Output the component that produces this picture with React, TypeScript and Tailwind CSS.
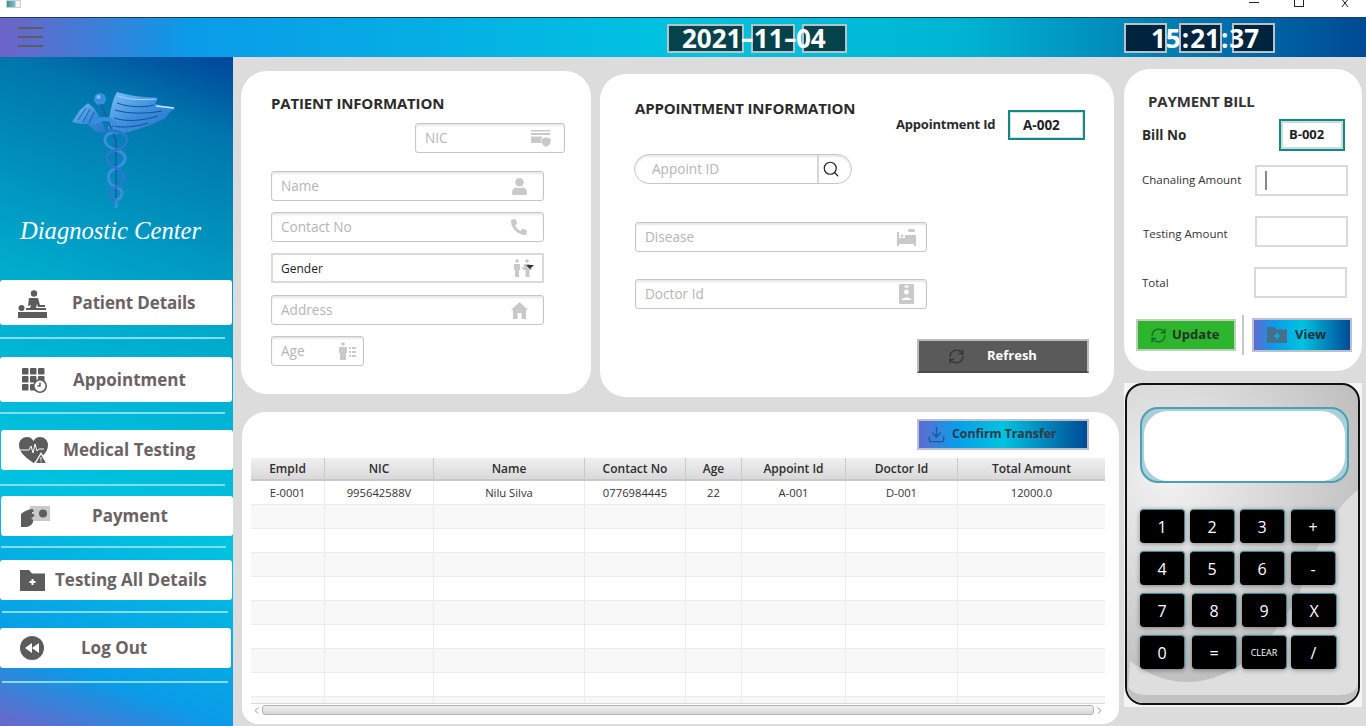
import React from 'react';
import { Download, RefreshCw, Search, ChevronLeft, ChevronRight } from 'lucide-react';
import { FaPhoneAlt, FaUser } from 'react-icons/fa';

const BTN_GRADIENT = 'bg-[linear-gradient(to_right,#5f6bd2,#0a9de8_22%,#00c3e0_50%,#004b96)]';

function Caduceus() {
  return (
    <svg viewBox="70 92 106 116" className="block w-[106px] h-[116px] ml-[70px] mt-[35px]">
      <defs>
        <linearGradient id="cad" x1="0" y1="0" x2="1" y2="1">
          <stop offset="0" stopColor="#7cc0f4" />
          <stop offset="0.5" stopColor="#3a8ede" />
          <stop offset="1" stopColor="#2470c4" />
        </linearGradient>
      </defs>
      <path d="M72 122 L80 110 L88 103 L94 108 L100 118 L108 134 L96 132 L88 124 L80 124Z" fill="url(#cad)" />
      <g stroke="#16518f" strokeWidth="0.8" fill="none">
        <path d="M78 120 L86 108" />
        <path d="M83 122 L90 109" />
        <path d="M89 123 L94 112" />
      </g>
      <path d="M108 128 C110 112 112 100 117 92 C130 96 145 97 158 98 L155 104 L175 108 L168 114 L166 118 L157 122 L150 125 C138 130 124 134 110 135Z" fill="url(#cad)" />
      <g fill="none" strokeWidth="1">
        <path d="M118 96 C130 100 142 100 156 99" stroke="#a4d6f8" />
        <path d="M156 106 L174 108" stroke="#c4e8fc" strokeWidth="1.4" />
        <path d="M117 103 C128 107 142 108 154 105" stroke="#17508e" />
        <path d="M115 110 C128 114 146 114 162 111" stroke="#17508e" />
        <path d="M114 118 C126 122 142 121 158 116" stroke="#17508e" />
        <path d="M112 126 C122 128 136 127 148 123" stroke="#17508e" />
      </g>
      <circle cx="100" cy="99" r="6" fill="#3a8ede" />
      <circle cx="98.5" cy="97" r="2" fill="#7cc0f4" />
      <path d="M101 104 L116 140 L116 208" stroke="#1c5fae" strokeWidth="2" fill="none" />
      <path d="M94 124 C100 116 112 118 116 126" stroke="#3a8ede" strokeWidth="4" fill="none" />
      <path d="M124 130 C98 132 102 146 116 150 C130 154 126 164 116 168 C105 172 107 184 116 187 C125 190 123 198 116 200 L116 208" stroke="#3a8ede" strokeWidth="3" fill="none" />
      <path d="M108 130 C134 132 130 146 116 150 C102 154 106 164 116 168 C127 172 125 184 116 187 C107 190 109 198 116 200" stroke="#2a78cc" strokeWidth="3" fill="none" />
    </svg>
  );
}

function MassageIcon() {
  return (
    <svg viewBox="0 0 29 28" className="w-[29px] h-[28px] fill-[#5c5c5c]">
      <circle cx="16" cy="3.5" r="3.2" />
      <path d="M11 8 h9 l2 7 h5 v2 h-7 l-1 -3 -1 4 h-6 l1 -3 -3 1z" />
      <circle cx="3.5" cy="18" r="3" />
      <path d="M8 18 h20 v2 H8z M0 22 h29 v6 H0z" />
    </svg>
  );
}

function CalendarClockIcon() {
  return (
    <svg viewBox="0 0 25 25" className="w-[25px] h-[25px]">
      <g fill="#5c5c5c">
        <rect x="0" y="0" width="6.5" height="6.5" rx="1" />
        <rect x="8" y="0" width="6.5" height="6.5" rx="1" />
        <rect x="16" y="0" width="6.5" height="6.5" rx="1" />
        <rect x="0" y="8" width="6.5" height="6.5" rx="1" />
        <rect x="8" y="8" width="6.5" height="6.5" rx="1" />
        <rect x="16" y="8" width="6.5" height="6.5" rx="1" />
        <rect x="0" y="16" width="6.5" height="6.5" rx="1" />
        <rect x="8" y="16" width="6.5" height="6.5" rx="1" />
      </g>
      <circle cx="18" cy="18" r="6.2" fill="#fff" stroke="#5c5c5c" strokeWidth="1.6" />
      <path d="M18 14.5 V18 H15.5" stroke="#5c5c5c" strokeWidth="1.4" fill="none" />
    </svg>
  );
}

function HeartIcon() {
  return (
    <svg viewBox="0 0 29 27" className="w-[29px] h-[27px]">
      <path d="M14.5 26 C6 20 0 15 0 8 C0 3 4 0 8 0 C11 0 13 1.5 14.5 4 C16 1.5 18 0 21 0 C25 0 29 3 29 8 C29 15 23 20 14.5 26Z" fill="#5c5c5c" />
      <path d="M1 13 H10 L12 9 L14 16 L16 7 L18 14 L20 12 H25" stroke="#fff" strokeWidth="1" fill="none" />
      <path d="M22 15 L29 27 H15Z" fill="#fff" />
      <path d="M22 17.5 L26.8 26 H17.2Z" fill="#5c5c5c" />
      <path d="M22 20 V23.5 M22 24.3 V25.3" stroke="#fff" strokeWidth="1" />
    </svg>
  );
}

function PaymentIcon() {
  return (
    <svg viewBox="0 0 29 21" className="w-[29px] h-[21px]">
      <rect x="9" y="0" width="20" height="15" fill="#c9c9c9" />
      <circle cx="22" cy="7.5" r="4" fill="#5c5c5c" />
      <path d="M0 8 C3 5 8 3 12 3 L13 8 C14 9 12 12 10 12 L12 14 C13 17 9 21 5 21 H0Z" fill="#5c5c5c" />
      <circle cx="12" cy="7" r="0.9" fill="#fff" />
    </svg>
  );
}

function FolderPlusIcon() {
  return (
    <svg viewBox="0 0 25 21" className="w-[25px] h-[21px]">
      <path d="M0 0 H9 L12 3.5 H25 V21 H0Z" fill="#5c5c5c" />
      <path d="M12.5 9 V15 M9.5 12 H15.5" stroke="#fff" strokeWidth="2" />
    </svg>
  );
}

function RewindIcon() {
  return (
    <svg viewBox="0 0 24 24" className="w-[24px] h-[24px]">
      <circle cx="12" cy="12" r="12" fill="#5c5c5c" />
      <path d="M12 7 V17 L5 12Z M19 7 V17 L12 12Z" fill="#fff" />
    </svg>
  );
}

function CardShieldIcon() {
  return (
    <svg viewBox="0 0 20 17" className="w-[20px] h-[17px] fill-[#c9c9c9]">
      <path d="M0 0 H19 V1.5 H0Z M0 3 H19 V5 H0Z M0 6.5 H11 V13 H0Z" />
      <path d="M15 7 L20 8.5 V12 C20 14.5 17.5 16 15 17 C12.5 16 10.5 14.5 10.5 12 V8.5Z" stroke="#fff" strokeWidth="0.6" />
    </svg>
  );
}

function HomeIcon() {
  return (
    <svg viewBox="0 0 17 17" className="w-[17px] h-[17px] fill-[#c9c9c9]">
      <path d="M8.5 0 L17 8 H15 V17 H10.5 V11 H6.5 V17 H2 V8 H0Z" />
    </svg>
  );
}

function GenderIcon() {
  return (
    <svg viewBox="0 0 20 18" className="w-[20px] h-[18px] fill-[#c9c9c9]">
      <circle cx="4" cy="2" r="1.8" />
      <circle cx="14" cy="2" r="1.8" />
      <path d="M1 5 H7 V11 H6 V18 H2 V11 H1Z" />
      <path d="M11 5 H17 L19 11 H16.5 V18 H12.5 V11 H10Z" />
      <path d="M8.5 8 H10 V9.5 H8.5Z" />
    </svg>
  );
}

function AgeIcon() {
  return (
    <svg viewBox="0 0 17 18" className="w-[17px] h-[18px] fill-[#c9c9c9]">
      <circle cx="4" cy="2" r="1.8" />
      <path d="M0 5 H8 V11 H7 V18 H1 V11 H0Z" />
      <path d="M10 5 H12 V7 H10Z M13 5 H17 V7 H13Z M10 9 H12 V11 H10Z M13 9 H17 V11 H13Z M10 13 H12 V15 H10Z M13 13 H17 V15 H13Z" />
    </svg>
  );
}

function BedIcon() {
  return (
    <svg viewBox="0 0 19 17" className="w-[19px] h-[17px] fill-[#c9c9c9]">
      <path d="M0 3 H2 V9 H19 V17 H17 V15 H2 V17 H0Z" />
      <circle cx="5" cy="7" r="1.4" />
      <path d="M8 6 H19 V9 H8Z" />
      <rect x="11" y="0" width="7" height="3" rx="1.5" />
    </svg>
  );
}

function BadgeIcon() {
  return (
    <svg viewBox="0 0 15 20" className="w-[15px] h-[20px]">
      <rect x="0" y="0" width="15" height="20" rx="1" fill="#c9c9c9" />
      <rect x="5.5" y="1.5" width="4" height="2" fill="#fff" />
      <circle cx="7.5" cy="8" r="2.5" fill="#fff" />
      <path d="M2.5 16 C3 12.5 12 12.5 12.5 16Z" fill="#fff" />
    </svg>
  );
}

function NavItem({ icon, label, className }: { icon: React.ReactNode; label: string; className: string }) {
  return (
    <div className={`flex items-center bg-white rounded-[3px] text-[17px] font-bold text-[#6b6363] ${className}`}>
      {icon}
      <span className="pb-[1px]">{label}</span>
    </div>
  );
}

function Sep({ className }: { className: string }) {
  return <div className={`h-[2px] bg-[#84dcec] ${className}`} />;
}

function Sidebar() {
  return (
    <aside className="w-[233px] h-[669px] shrink-0 flex flex-col bg-[linear-gradient(200deg,#00459a_0%,#0076ad_11%,#00aacb_38%,#00c3e0_65%,#0a9be8_89%,#6d66c9_100%)]">
      <Caduceus />
      <div className="mt-[7px] ml-[20px] text-[24.6px] leading-[32px] italic text-white font-['Liberation_Serif',serif] whitespace-nowrap">
        Diagnostic Center
      </div>
      <NavItem className="mt-[33px] h-[45px] w-[232px] pl-[18px] pt-[2px] gap-[25px] tracking-[-0.15px]" icon={<MassageIcon />} label="Patient Details" />
      <Sep className="mt-[12px] w-[225px]" />
      <NavItem className="mt-[18px] h-[45px] w-[232px] pl-[22px] pt-[2px] gap-[26px]" icon={<CalendarClockIcon />} label="Appointment" />
      <Sep className="mt-[10px] w-[225px]" />
      <NavItem className="mt-[16px] h-[40px] w-[232px] ml-[1px] pl-[18px] gap-[15px]" icon={<HeartIcon />} label="Medical Testing" />
      <Sep className="mt-[14px] w-[225px]" />
      <NavItem className="mt-[10px] h-[40px] w-[232px] ml-[1px] pl-[20px] gap-[42px]" icon={<PaymentIcon />} label="Payment" />
      <Sep className="mt-[10px] w-[225px] ml-[1px]" />
      <NavItem className="mt-[12px] h-[40px] w-[232px] pl-[20px] gap-[10px]" icon={<FolderPlusIcon />} label="Testing All Details" />
      <Sep className="mt-[11px] w-[226px] ml-[2px]" />
      <NavItem className="mt-[15px] h-[40px] w-[231px] pl-[20px] gap-[37px]" icon={<RewindIcon />} label="Log Out" />
      <Sep className="mt-[13px] w-[226px] ml-[2px]" />
    </aside>
  );
}

function Field({ placeholder, icon, className }: { placeholder: string; icon: React.ReactNode; className: string }) {
  return (
    <div className={`flex items-center justify-between h-[30px] rounded-[3px] border border-[#c6c6c6] shadow-[inset_0_2px_2px_#e8e8e8] pl-[9px] text-[13.6px] text-[#b8b4b4] ${className}`}>
      <span>{placeholder}</span>
      {icon}
    </div>
  );
}

function PatientCard() {
  return (
    <section className="mt-[14px] w-[350px] h-[323px] rounded-[26px] bg-white pl-[30px] flex flex-col shrink-0">
      <h2 className="mt-[21px] text-[15px] leading-[22px] font-bold tracking-[-0.15px] text-[#2b2b2b]">PATIENT INFORMATION</h2>
      <Field className="mt-[9px] ml-[144px] w-[150px] pr-[13px]" placeholder="NIC" icon={<CardShieldIcon />} />
      <Field className="mt-[18px] w-[273px] pr-[15px]" placeholder="Name" icon={<FaUser className="w-[17px] h-[17px] text-[#c9c9c9]" />} />
      <Field className="mt-[11px] w-[273px] pr-[16px]" placeholder="Contact No" icon={<FaPhoneAlt className="w-[16px] h-[16px] text-[#c9c9c9]" />} />
      <div className="mt-[11px] w-[273px] h-[30px] flex items-center justify-between border-2 border-[#dadada] pl-[8px] pr-[9px] text-[12px] text-[#222]">
        <span className="pt-[1px]">Gender</span>
        <span className="relative flex items-center">
          <GenderIcon />
          <span className="absolute -right-[1px] top-[6px] w-0 h-0 border-x-[4px] border-x-transparent border-t-[4px] border-t-[#333]" />
        </span>
      </div>
      <Field className="mt-[12px] w-[273px] pr-[15px]" placeholder="Address" icon={<HomeIcon />} />
      <Field className="mt-[11px] w-[93px] pr-[7px]" placeholder="Age" icon={<AgeIcon />} />
    </section>
  );
}

function AppointmentCard() {
  return (
    <section className="mt-[17px] ml-[9px] w-[514px] h-[323px] rounded-[26px] bg-white flex flex-col shrink-0">
      <div className="flex items-start">
        <h2 className="ml-[35px] w-[261px] mt-[23px] text-[15px] leading-[22px] font-bold tracking-[-0.15px] text-[#2b2b2b] whitespace-nowrap">APPOINTMENT INFORMATION</h2>
        <span className="w-[112px] mt-[40px] text-[13px] leading-[20px] font-bold tracking-[-0.2px] text-[#2b2b2b] whitespace-nowrap">Appointment Id</span>
        <div className="mt-[36px] w-[77px] h-[30px] flex items-center border-2 border-[#118a86] shadow-[inset_0_0_0_1px_#d5e2e2] pl-[13px] text-[13.5px] font-bold text-[#222]">A-002</div>
      </div>
      <div className="ml-[34px] mt-[14px] w-[218px] h-[30px] flex items-center rounded-full border border-[#c6c6c6] shadow-[inset_0_2px_2px_#e8e8e8] text-[13.6px] text-[#b8b4b4]">
        <span className="pl-[17px] w-[182px]">Appoint ID</span>
        <div className="h-full flex-1 flex items-center justify-center border-l-2 border-[#d6d6d6] pr-[8px]">
          <Search className="w-[18px] h-[18px] text-[#222]" strokeWidth={1.6} />
        </div>
      </div>
      <Field className="ml-[35px] mt-[38px] w-[292px] pr-[10px]" placeholder="Disease" icon={<BedIcon />} />
      <Field className="ml-[35px] mt-[27px] w-[292px] pr-[12px]" placeholder="Doctor Id" icon={<BadgeIcon />} />
      <div className="ml-[317px] mt-[30px] w-[172px] h-[34px] flex items-center bg-[#5a5a5a] border-2 border-[#bcbcbc] border-b-[#4a4a4a] pl-[29px] text-[13px] font-bold text-white">
        <RefreshCw className="w-[17px] h-[19px] text-[#363636]" strokeWidth={2} />
        <span className="ml-[22px]">Refresh</span>
      </div>
    </section>
  );
}

const COLS = 'grid grid-cols-[74px_109px_151px_101px_56px_104px_112px_147px]';
const HEADERS = ['EmpId', 'NIC', 'Name', 'Contact No', 'Age', 'Appoint Id', 'Doctor Id', 'Total Amount'];
const FIRST_ROW = ['E-0001', '995642588V', 'Nilu Silva', '0776984445', '22', 'A-001', 'D-001', '12000.0'];
const EMPTY_ROWS = [1, 2, 3, 4, 5, 6, 7, 8, 9];

function TableCard() {
  return (
    <section className="mt-[15px] ml-[1px] w-[877px] h-[312px] rounded-t-[24px] rounded-b-[16px] bg-white flex flex-col">
      <div className={`mt-[7px] ml-[675px] w-[172px] h-[31px] flex items-center border-2 border-[#bcc0cc] ${BTN_GRADIENT} pl-[8px] text-[12.25px] font-bold text-[#33384a]`}>
        <Download className="w-[19px] h-[19px] text-[#1a5a9c]" strokeWidth={1.8} />
        <span className="ml-[6px]">Confirm Transfer</span>
      </div>
      <div className="mt-[8px] ml-[9px] w-[854px]">
        <div className={`${COLS} h-[23px] border-b-2 border-[#c8c8c8] bg-[linear-gradient(to_bottom,#f0f0f0,#d9d9d9)] text-[12px] font-semibold text-[#2e2e2e]`}>
          {HEADERS.map((h) => (
            <div key={h} className="flex items-center justify-center border-r border-[#cacaca] last:border-r-0 pt-[1px]">{h}</div>
          ))}
        </div>
        <div className="h-[222px] overflow-hidden">
          <div className={`${COLS} h-[24px] border-b border-[#ececec] text-[11.25px] text-[#333]`}>
            {FIRST_ROW.map((c) => (
              <div key={c} className="flex items-center justify-center border-r border-[#ececec] last:border-r-0 pt-[1px]">{c}</div>
            ))}
          </div>
          {EMPTY_ROWS.map((r) => (
            <div key={r} className={`${COLS} h-[24px] border-b border-[#ececec] even:bg-[#f8f8f8] odd:bg-white`}>
              {HEADERS.map((h) => (
                <div key={h} className="border-r border-[#ececec] last:border-r-0" />
              ))}
            </div>
          ))}
        </div>
        <div className="h-[13px] flex items-center border-t border-[#d8d8d8]">
          <ChevronLeft className="w-[11px] h-[11px] text-[#888]" />
          <div className="flex-1 h-[10px] rounded-[3px] border border-[#b4b4b4] bg-[linear-gradient(to_bottom,#f0f0f0,#d8d8d8)]" />
          <ChevronRight className="w-[11px] h-[11px] text-[#888]" />
        </div>
      </div>
    </section>
  );
}

function PaymentCard() {
  return (
    <section className="mt-[12px] w-[238px] h-[302px] rounded-[26px] bg-white flex flex-col">
      <h2 className="ml-[24px] mt-[21px] text-[15px] leading-[22px] font-bold tracking-[-0.15px] text-[#333]">PAYMENT BILL</h2>
      <div className="flex items-center mt-[7px] h-[32px]">
        <span className="ml-[18px] w-[137px] text-[13.5px] font-bold text-[#2b2b2b]">Bill No</span>
        <div className="w-[66px] h-[32px] flex items-center border-2 border-[#118a86] shadow-[inset_0_0_0_2px_#cfdcdc] pl-[8px] text-[13px] font-bold text-[#222]">B-002</div>
      </div>
      <div className="flex items-center mt-[14px] h-[31px]">
        <span className="ml-[18px] w-[113px] pb-[2px] text-[11.5px] text-[#333] whitespace-nowrap">Chanaling Amount</span>
        <div className="w-[93px] h-[31px] flex items-center border-2 border-[#dadada] pl-[8px]">
          <span className="w-[2px] h-[19px] bg-[#888]" />
        </div>
      </div>
      <div className="flex items-center mt-[20px] h-[31px]">
        <span className="ml-[19px] w-[112px] pt-[4px] text-[11.5px] text-[#333] whitespace-nowrap">Testing Amount</span>
        <div className="w-[93px] h-[31px] border-2 border-[#dadada]" />
      </div>
      <div className="flex items-center mt-[20px] h-[31px]">
        <span className="ml-[18px] w-[112px] text-[11.5px] text-[#333] whitespace-nowrap">Total</span>
        <div className="w-[93px] h-[31px] border-2 border-[#dadada]" />
      </div>
      <div className="flex items-center mt-[17px] ml-[12px]">
        <div className="w-[100px] h-[32px] flex items-center bg-[#2db52d] border-2 border-[#bcd0bc] pl-[12px] text-[13px] font-bold text-[#26332a]">
          <RefreshCw className="w-[17px] h-[19px] text-[#176a2a]" strokeWidth={2} />
          <span className="ml-[5px]">Update</span>
        </div>
        <div className="ml-[6px] w-[2px] h-[40px] bg-[#c8c8c8]" />
        <div className={`ml-[8px] w-[100px] h-[34px] flex items-center border-2 border-[#bcc0cc] ${BTN_GRADIENT} pl-[13px] text-[13px] font-bold text-[#22303a]`}>
          <svg viewBox="0 0 20 16" className="w-[20px] h-[16px]">
            <path d="M0 0 H7 L9 2.5 H20 V16 H0Z" fill="#45708c" />
            <path d="M10 6 V12 M7 9 H13" stroke="#08a8e0" strokeWidth="2" />
          </svg>
          <span className="ml-[8px]">View</span>
        </div>
      </div>
    </section>
  );
}

function Key({ label, className, small }: { label: string; className?: string; small?: boolean }) {
  return (
    <div className={`w-[45px] h-[34px] flex items-center justify-center rounded-[4px] bg-black border-t border-r border-[#3f8a9a] shadow-[0_1px_5px_#00000066] text-white ${small ? 'text-[9px]' : 'text-[16px]'} ${className ?? ''}`}>
      {label}
    </div>
  );
}

function Calculator() {
  return (
    <div className="mt-[12px] w-[238px] h-[324px] bg-[#f4f4f4]">
      <div className="relative ml-[1px] w-[235px] h-[322px] rounded-[18px] border-2 border-[#111] bg-[radial-gradient(circle_at_18%_30%,#f2f2f2_0%,#dcdcdc_30%,#bcbcbc_75%,#c8c8c8_100%)] overflow-hidden">
        {/* lighter swoosh behind the keys */}
        <svg viewBox="0 0 231 318" className="absolute inset-0 w-full h-full">
          <path d="M231 105 C205 125 195 150 173 206 C155 240 120 296 60 297 C35 297 15 285 3 276 L0 318 L231 318Z" fill="#dedede" />
          <path d="M0 300 C4 307 10 310 20 310 H210 C222 310 228 307 231 300 V318 H0Z" fill="#c2c2c2" />
        </svg>
        <div className="relative flex flex-col">
          <div className="ml-[13px] mt-[22px] w-[209px] h-[76px] rounded-[18px] border-2 border-[#4f9fb2] bg-[#a9d0da]">
            <div className="ml-[2px] mt-[2px] w-[201px] h-[70px] rounded-[24px] bg-white" />
          </div>
          <div className="ml-[13px] mt-[26px] flex gap-[5px]">
            <Key label="1" />
            <Key label="2" />
            <Key label="3" />
            <Key label="+" className="ml-[1px] w-[44px]" />
          </div>
          <div className="ml-[13px] mt-[8px] flex gap-[5px]">
            <Key label="4" />
            <Key label="5" />
            <Key label="6" />
            <Key label="-" className="ml-[1px] w-[44px]" />
          </div>
          <div className="ml-[13px] mt-[8px] flex gap-[5px]">
            <Key label="7" />
            <Key label="8" className="ml-[2px]" />
            <Key label="9" />
            <Key label="X" />
          </div>
          <div className="ml-[13px] mt-[8px] flex gap-[5px]">
            <Key label="0" />
            <Key label="=" className="ml-[2px]" />
            <Key label="CLEAR" small />
            <Key label="/" className="-ml-[1px] w-[46px]" />
          </div>
        </div>
      </div>
    </div>
  );
}

function TopBars() {
  return (
    <>
      <div className="h-[18px] bg-white border-b border-[#1c3c5c] flex overflow-hidden">
        <div className="ml-[6px] w-[15px] h-[8px] border border-[#cfcfcf] bg-[linear-gradient(to_right,#3f9a7a,#7fb8d8_60%,#f4f4f4_70%)]" />
        <div className="ml-auto flex items-start">
          <span className="mt-[2px] w-[10px] h-[1px] bg-[#222]" />
          <span className="ml-[35px] -mt-[3px] w-[10px] h-[10px] border border-[#222]" />
          <svg viewBox="0 0 10 8" className="ml-[36px] mr-[16px] w-[10px] h-[8px]">
            <path d="M1 -2 L8 7 M9 -2 L2 7" stroke="#222" strokeWidth="1" />
          </svg>
        </div>
      </div>
      <header className="h-[39px] flex items-start bg-[linear-gradient(to_right,#6f63c8_0%,#0a9be8_14%,#00c3e0_50%,#00b5d4_70%,#004a94_100%)]">
        <div className="ml-[18px] mt-[9px] w-[25px] flex flex-col gap-[7px]">
          <span className="h-[2px] bg-[#5d5d5d]" />
          <span className="h-[2px] bg-[#5d5d5d]" />
          <span className="h-[2px] bg-[#5d5d5d]" />
        </div>
        <div className="relative ml-[624px] mt-[6px] w-[180px] h-[29px] flex">
          <div className="w-[77px] border-2 border-[#b9c2c4] bg-[#04424c]" />
          <div className="ml-[7px] w-[44px] border-2 border-[#b9c2c4] bg-[#04424c]" />
          <div className="ml-[7px] w-[45px] border-2 border-[#b9c2c4] bg-[#04424c]" />
          <span className="absolute left-[15px] top-0 h-full flex items-center text-[26px] font-bold text-white whitespace-nowrap">
            2021<span className="mx-[2px] inline-block scale-x-[1.5]">-</span>11<span className="mx-[2px] inline-block scale-x-[1.5]">-</span>04
          </span>
        </div>
        <div className="relative ml-[277px] mt-[5px] w-[151px] h-[30px] flex">
          <div className="w-[43px] border-2 border-[#b9c2c4] bg-[#00233e]" />
          <div className="ml-[12px] w-[43px] border-2 border-[#b9c2c4] bg-[#00233e]" />
          <div className="ml-[10px] w-[43px] border-2 border-[#b9c2c4] bg-[#00233e]" />
          <span className="absolute left-[27px] top-0 h-full flex items-center text-[26px] font-bold text-white whitespace-nowrap">
            15<span className="mx-[1px]">:</span>21<span className="mx-[1px]">:</span>37
          </span>
        </div>
      </header>
    </>
  );
}

export default function App() {
  return (
    <div className="w-[1366px] h-[726px] overflow-hidden bg-[#dcdcdc] font-['Open_Sans',sans-serif]">
      <TopBars />
      <div className="flex">
        <Sidebar />
        <main className="flex ml-[8px]">
          <div className="w-[878px] flex flex-col">
            <div className="flex h-[340px] items-start">
              <PatientCard />
              <AppointmentCard />
            </div>
            <TableCard />
          </div>
          <div className="ml-[5px] flex flex-col">
            <PaymentCard />
            <Calculator />
          </div>
        </main>
      </div>
    </div>
  );
}
